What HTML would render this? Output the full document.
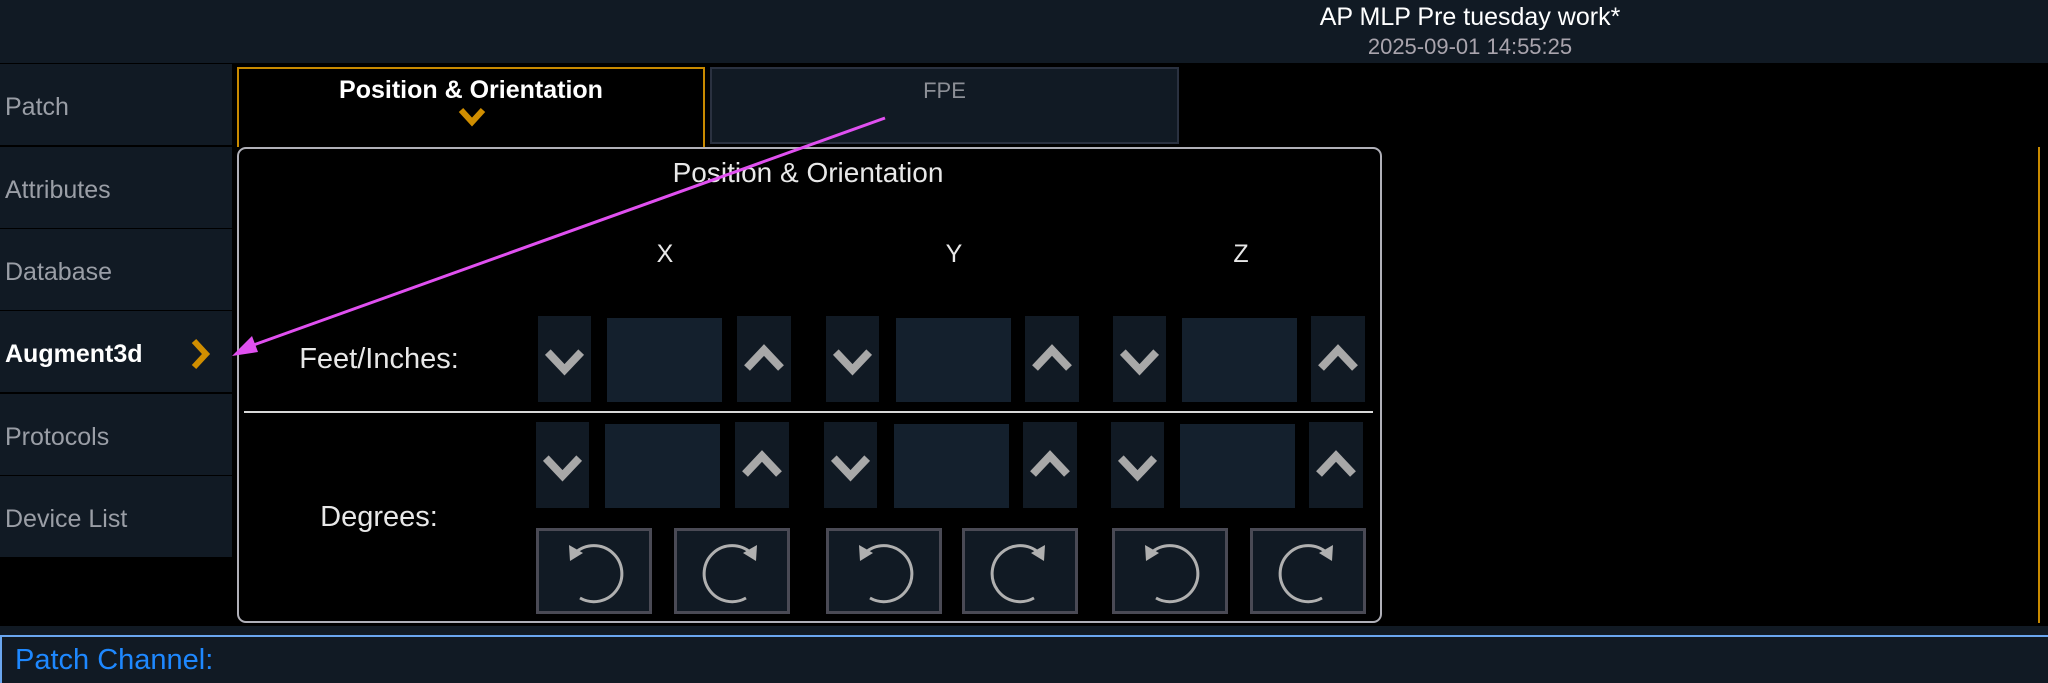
<!DOCTYPE html>
<html><head><meta charset="utf-8"><style>
*{margin:0;padding:0;box-sizing:border-box}
body{width:2048px;height:683px;background:#000;position:relative;overflow:hidden;font-family:"Liberation Sans",sans-serif}
.a{position:absolute}
.side{left:0;width:232px;height:81px;background:#111a24;color:#9a9ea6;font-size:25px;padding-left:5px;padding-top:6px;display:flex;align-items:center}
.btn{background:#111a24}
.fld{background:#14202d}
.rot{border:3px solid #4a4a55;background:#111a24}
.c{text-align:center;color:#e8e8e8}
</style></head><body>
<div class="a" style="left:0;top:0;width:2048px;height:63px;background:#111a24"></div>
<div class="a c" style="left:1170px;top:3px;width:600px;font-size:25px;color:#fff">AP MLP Pre tuesday work*</div>
<div class="a c" style="left:1170px;top:34px;width:600px;font-size:22px;color:#a9a4ad">2025-09-01 14:55:25</div>

<div class="a side" style="top:64px">Patch</div>
<div class="a side" style="top:147px">Attributes</div>
<div class="a side" style="top:229px">Database</div>
<div class="a side" style="top:311px;color:#fff;font-weight:bold">Augment3d</div>
<svg class="a" style="left:188px;top:337px" width="24" height="34"><path d="M6 4 L18 17 L6 30" stroke="#d08e00" stroke-width="6" fill="none"/></svg>
<div class="a side" style="top:394px">Protocols</div>
<div class="a side" style="top:476px">Device List</div>

<div class="a" style="left:237px;top:67px;width:468px;height:80px;border:2px solid #c98a00;border-bottom:none;background:#000"></div>
<div class="a c" style="left:237px;top:76px;width:468px;font-size:25px;font-weight:bold;color:#fff">Position &amp; Orientation</div>
<svg class="a" style="left:458px;top:106px" width="28" height="22"><path d="M3 4 L14 16 L25 4" stroke="#d08e00" stroke-width="6" fill="none"/></svg>
<div class="a" style="left:710px;top:67px;width:469px;height:77px;border:2px solid #2a3140;background:#111a24"></div>
<div class="a c" style="left:710px;top:78px;width:469px;font-size:22px;color:#8c8f96">FPE</div>

<div class="a" style="left:237px;top:147px;width:1145px;height:476px;border:2px solid #b0b0b8;border-radius:9px"></div>
<div class="a c" style="left:508px;top:157px;width:600px;font-size:28px">Position &amp; Orientation</div>
<div class="a c" style="left:625px;top:240px;width:80px;font-size:25px">X</div>
<div class="a c" style="left:914px;top:240px;width:80px;font-size:25px">Y</div>
<div class="a c" style="left:1201px;top:240px;width:80px;font-size:25px">Z</div>
<div class="a c" style="left:229px;top:343px;width:300px;font-size:29px">Feet/Inches:</div>
<div class="a c" style="left:229px;top:501px;width:300px;font-size:29px">Degrees:</div>
<div class="a" style="left:244px;top:411px;width:1129px;height:2px;background:#d8d8d8"></div>

<div id="g"></div>

<div class="a" style="left:2038px;top:147px;width:2px;height:476px;background:#c98a00"></div>
<div class="a" style="left:0;top:626px;width:2048px;height:57px;background:#111a24"></div>
<div class="a" style="left:0;top:635px;width:2048px;height:48px;border-top:2px solid #6aa6f0;border-left:2px solid #6aa6f0"></div>
<div class="a" style="left:15px;top:644px;font-size:29px;color:#1e88ff">Patch Channel:</div>

<svg class="a" style="left:0;top:0" width="2048" height="683">
<line x1="885" y1="118" x2="248" y2="347" stroke="#e050f0" stroke-width="3"/>
<polygon points="232,356 252,336 258,352" fill="#e050f0"/>
</svg>
<script>
var g=document.getElementById('g'),h='';
var down='<svg width="100%" height="100%" viewBox="0 0 54 86"><path d="M10 36 L27 54 L44 36" stroke="#a8a8a8" stroke-width="8" fill="none"/></svg>';
var up='<svg width="100%" height="100%" viewBox="0 0 54 86"><path d="M10 52 L27 34 L44 52" stroke="#a8a8a8" stroke-width="8" fill="none"/></svg>';
var groups=[[538,607,737],[826,896,1025],[1113,1182,1311]];
[[316,0],[422,-2]].forEach(function(r){groups.forEach(function(gp){
h+='<div class="a btn" style="left:'+(gp[0]+r[1])+'px;top:'+r[0]+'px;width:53px;height:86px">'+down+'</div>';
h+='<div class="a fld" style="left:'+(gp[1]+r[1])+'px;top:'+(r[0]+2)+'px;width:115px;height:84px"></div>';
h+='<div class="a btn" style="left:'+(gp[2]+r[1])+'px;top:'+r[0]+'px;width:54px;height:86px">'+up+'</div>';});});
var ccw='<svg width="110" height="80" viewBox="0 0 110 80"><path d="M36 22 A28 28 0 1 1 41 67" stroke="#b0b0b0" stroke-width="3" fill="none"/><polygon points="30,14 44,22 31,30" fill="#b0b0b0"/></svg>';
var cw='<svg width="110" height="80" viewBox="0 0 110 80"><path d="M74 22 A28 28 0 1 0 69 67" stroke="#b0b0b0" stroke-width="3" fill="none"/><polygon points="80,14 66,22 79,30" fill="#b0b0b0"/></svg>';
[536,674,826,962,1112,1250].forEach(function(x,i){
h+='<div class="a rot" style="left:'+x+'px;top:528px;width:116px;height:86px;display:flex;align-items:center;justify-content:center">'+(i%2?cw:ccw)+'</div>';});
g.innerHTML=h;
</script>
</body></html>
